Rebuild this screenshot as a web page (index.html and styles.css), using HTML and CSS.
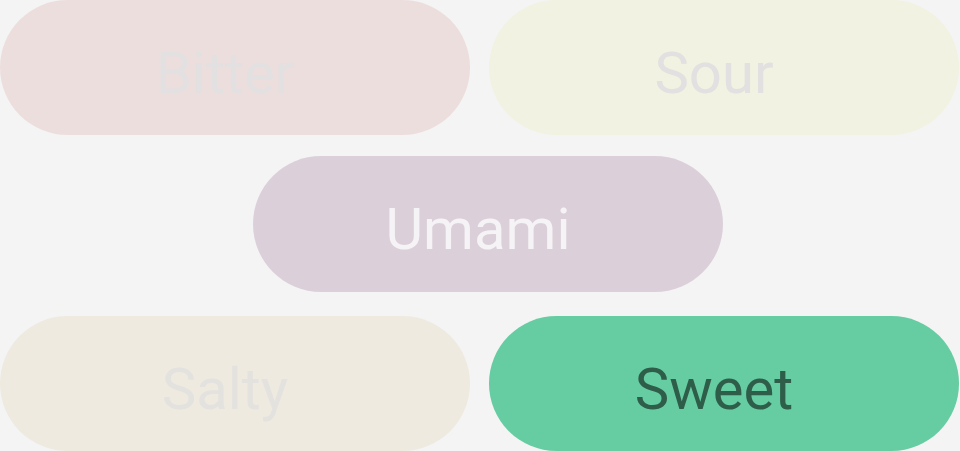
FILE: index.html
```html
<!DOCTYPE html>
<html>
<head>
<meta charset="utf-8">
<link rel="stylesheet" href="styles.css">
</head>
<body>
<div class="board">
  <div class="row">
    <div class="pill bitter">Bitter</div>
    <div class="pill sour">Sour</div>
  </div>
  <div class="row mid">
    <div class="pill umami">Umami</div>
  </div>
  <div class="row last">
    <div class="pill salty">Salty</div>
    <div class="pill sweet">Sweet</div>
  </div>
</div>
</body>
</html>
```
FILE: styles.css
```css
html, body {
  margin: 0;
  padding: 0;
  background: #f4f4f4;
}
.board {
  width: 960px;
  height: 451px;
  display: flex;
  flex-direction: column;
  font-family: Roboto, "Noto Sans", sans-serif;
}
.row {
  display: flex;
  gap: 19px;
  justify-content: flex-start;
}
.row.mid {
  margin-top: 21px;
  justify-content: center;
  padding-left: 16px;
}
.row.last {
  margin-top: 24px;
}
.pill {
  box-sizing: border-box;
  width: 470px;
  height: 135px;
  border-radius: 68px;
  display: flex;
  align-items: center;
  justify-content: center;
  padding: 10px 20px 0 0;
  font-size: 58px;
  color: #e2e0e0;
}
.bitter { background: #eddede; }
.sour { background: #f1f2e1; }
.umami { background: #dbd0d9; color: #f5f3f5; height: 136px; }
.salty { background: #eeeae0; color: #e3e2de; }
.sweet { background: #66cca2; color: #2e5e4a; }
```
